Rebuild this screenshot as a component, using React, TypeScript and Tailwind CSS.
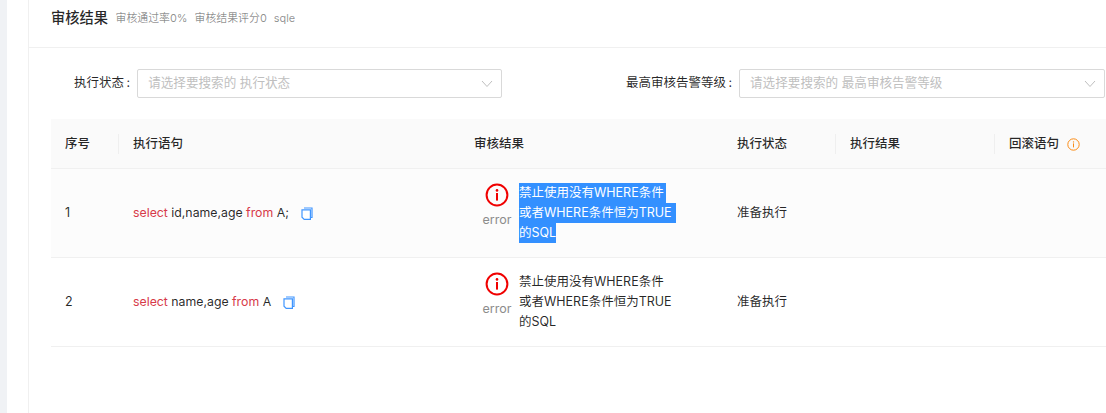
const labelFont = { fontFamily: "Inter, 'Noto Sans CJK SC', sans-serif" };

function CopyIcon() {
  return (
    <svg width="12" height="13" viewBox="0 0 12 13" fill="none" stroke="#4096ff" strokeWidth="1.2" className="shrink-0">
      <path d="M3 1h8v9.5H9.5" />
      <path d="M1 2.8h8.4v9.6H3.2L1 10.2z" fill="#fff" />
    </svg>
  );
}

function ErrorIcon() {
  return (
    <svg width="24" height="24" viewBox="0 0 24 24" fill="none">
      <circle cx="12" cy="12" r="10.4" stroke="#f00000" strokeWidth="2" />
      <circle cx="12" cy="7.4" r="1.3" fill="#f00000" />
      <rect x="11" y="10" width="2" height="7.6" fill="#f00000" />
    </svg>
  );
}

function Chevron() {
  return (
    <svg width="12" height="8" viewBox="0 0 12 8" fill="none" stroke="#bfbfbf" strokeWidth="1" className="shrink-0">
      <path d="M1 1l5 5.5L11 1" />
    </svg>
  );
}

function Filter({ label, placeholder, width }: { label: string; placeholder: string; width: string }) {
  return (
    <div className="flex items-center">
      <span className="text-[12.5px] text-[#000000d9]">{label}</span>
      <span className="ml-[2.5px] mr-[7px] text-[12.5px] text-[#000000d9]">:</span>
      <div className={`${width} h-[29px] flex items-center justify-between pl-[10px] pr-[8px] border border-[#d9d9d9] rounded-[2px] bg-white text-[12.6px] text-[#bfbfbf]`}>
        <span>{placeholder}</span>
        <Chevron />
      </div>
    </div>
  );
}

const lines = ["禁止使用没有WHERE条件", "或者WHERE条件恒为TRUE", "的SQL"];

function Row({ no, sql, selected }: { no: number; sql: React.ReactNode; selected?: boolean }) {
  return (
    <div className={`grid grid-cols-[68px_341px_263px_113px_159px_1fr] h-[89px] items-center border-b border-[#f0f0f0] text-[12.5px] text-[#000000d9] ${selected ? "bg-[#fcfcfc]" : "bg-white"}`}>
      <div className="pl-[14px]">{no}</div>
      <div className="pl-[14px] flex items-center gap-[12px]">
        <span className="text-[12.3px]">{sql}</span>
        <CopyIcon />
      </div>
      <div className="pl-[14px] flex items-start gap-[4px]">
        <div className="ml-[5px] w-[36px] flex flex-col items-center gap-[3px] text-[#8c8c8c] leading-[20px]">
          <ErrorIcon />
          <span>error</span>
        </div>
        <div className="leading-[20px]">
          {lines.map((t, i) => (
            <div key={t} className={selected ? `w-fit bg-[#3390ff] text-white ${i === 2 ? "" : i === 1 ? "pr-[4px]" : "pr-[2px]"}` : ""}>
              {t}
            </div>
          ))}
        </div>
      </div>
      <div className="pl-[14px]">准备执行</div>
      <div />
      <div />
    </div>
  );
}

function Kw({ children }: { children: React.ReactNode }) {
  return <span className="text-[#d73a49]">{children}</span>;
}

function HeadCell({ children, sep = true }: { children?: React.ReactNode; sep?: boolean }) {
  return (
    <div className="relative pl-[14px] pt-[1px] h-full flex items-center">
      {children}
      {sep && <span className="absolute right-0 top-[15px] h-[20px] w-px bg-[#efefef]" />}
    </div>
  );
}

export default function App() {
  return (
    <div className="w-[1106px] h-[413px] overflow-hidden flex bg-white" style={labelFont}>
      <div className="w-[7px] bg-[#f0f2f5]" />
      <div className="w-[21px]" />
      <div className="flex-1 border-l border-[#f0f0f0] min-w-0">
        <div className="h-[48px] border-b border-[#f0f0f0] pl-[22px] pb-[12px] flex items-center">
          <span className="text-[14.25px] font-medium text-[#000000d9] mr-[7.5px]">审核结果</span>
          <span className="text-[10.9px] text-[#00000073] mt-[2px] mr-[7px]">审核通过率0%</span>
          <span className="text-[10.9px] text-[#00000073] mt-[2px] mr-[7px]">审核结果评分0</span>
          <span className="text-[10.9px] text-[#00000073] mt-[2px]">sqle</span>
        </div>
        <div className="pl-[22px]">
          <div className="flex pt-[21px] justify-between pr-[1px]">
            <div className="ml-[23px]">
              <Filter label="执行状态" placeholder="请选择要搜索的 执行状态" width="w-[365px]" />
            </div>
            <Filter label="最高审核告警等级" placeholder="请选择要搜索的 最高审核告警等级" width="w-[366px]" />
          </div>
          <div className="mt-[21px]">
            <div className="grid grid-cols-[68px_341px_263px_113px_159px_1fr] h-[50px] items-center bg-[#fafafa] border-b border-[#f0f0f0] text-[12.5px] text-[#000000d9] font-medium">
              <HeadCell>序号</HeadCell>
              <HeadCell sep={false}>执行语句</HeadCell>
              <HeadCell sep={false}>审核结果</HeadCell>
              <HeadCell>执行状态</HeadCell>
              <HeadCell>执行结果</HeadCell>
              <HeadCell sep={false}>
                回滚语句
                <svg width="13" height="13" viewBox="0 0 13 13" fill="none" className="ml-[8px]">
                  <circle cx="6.5" cy="6.5" r="5.7" stroke="#fa8c16" />
                  <circle cx="6.5" cy="3.9" r="0.7" fill="#fa8c16" />
                  <rect x="6" y="5.4" width="1" height="4" fill="#fa8c16" />
                </svg>
              </HeadCell>
            </div>
            <Row no={1} selected sql={<><Kw>select</Kw> id,name,age <Kw>from</Kw> A;</>} />
            <Row no={2} sql={<><Kw>select</Kw> name,age <Kw>from</Kw> A</>} />
          </div>
        </div>
      </div>
    </div>
  );
}
